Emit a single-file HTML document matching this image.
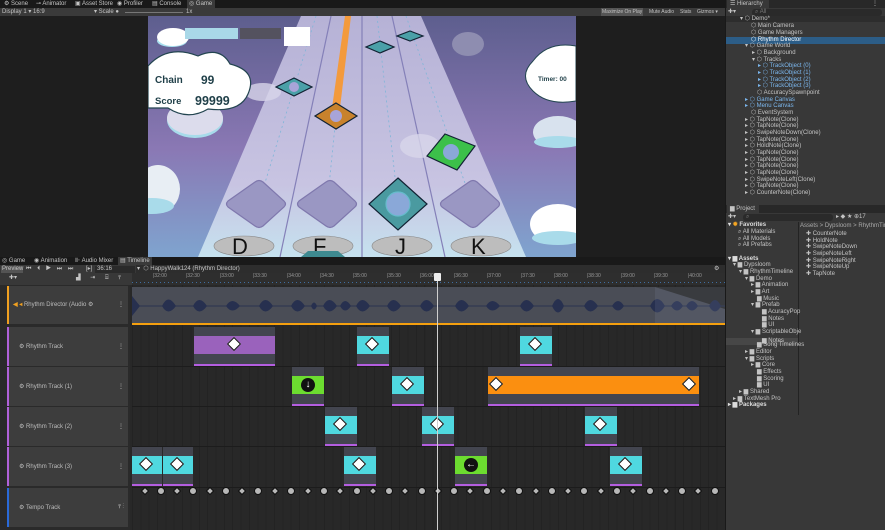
<!DOCTYPE html>
<html><head><meta charset="utf-8">
<style>
*{margin:0;padding:0;box-sizing:border-box}
body{width:885px;height:530px;background:#282828;font-family:"Liberation Sans",sans-serif;font-size:6px;color:#c4c4c4;position:relative;overflow:hidden}
.a{position:absolute;white-space:nowrap}
.clip{position:absolute;height:39px;background:#43454f}
.clip .c{position:absolute;left:0;right:0;top:9px;height:18px}
.clip .p{position:absolute;left:0;right:0;bottom:0;height:2px;background:#b45ee0}
.dm{position:absolute;width:10px;height:10px;background:#fff;border:1.5px solid #111;transform:rotate(45deg);top:4px}
.th{position:absolute;left:7px;width:121px;background:#3d3d3d;border-left:2px solid #b061d9}
.th span{position:absolute;left:10px;top:50%;margin-top:-4px;color:#bdbdbd}
.th i{position:absolute;right:4px;top:50%;margin-top:-4px;font-style:normal}
.h div{position:absolute;white-space:nowrap;height:7px;line-height:6.7px}
.cyan{background:#4fd8e0}
</style></head><body>
<div class="a" style="left:0;top:0;width:725px;height:8px;background:#191919"></div>
<div class="a" style="left:187px;top:0;width:28px;height:8px;background:#3a3a3a"></div>
<div class="a" style="left:4px;top:0;line-height:8px">⚙ Scene</div>
<div class="a" style="left:36px;top:0;line-height:8px">⊸ Animator</div>
<div class="a" style="left:75px;top:0;line-height:8px">▣ Asset Store</div>
<div class="a" style="left:117px;top:0;line-height:8px">◉ Profiler</div>
<div class="a" style="left:152px;top:0;line-height:8px">▤ Console</div>
<div class="a" style="left:189px;top:0;line-height:8px">◎ Game</div>
<div class="a" style="left:0;top:8px;width:725px;height:8px;background:#3a3a3a"></div>
<div class="a" style="left:2px;top:8px;line-height:8px">Display 1 ▾ 16:9</div>
<div class="a" style="left:94px;top:8px;line-height:8px">▾ Scale ●</div>
<div class="a" style="left:125px;top:12px;width:58px;height:1px;background:#777"></div>
<div class="a" style="left:186px;top:8px;line-height:8px">1x</div>
<div class="a" style="left:601px;top:8px;line-height:8px;background:#555;padding:0 1px;font-size:5px">Maximize On Play</div>
<div class="a" style="left:649px;top:8px;line-height:8px;font-size:5px">Mute Audio</div>
<div class="a" style="left:680px;top:8px;line-height:8px;font-size:5px">Stats</div>
<div class="a" style="left:697px;top:8px;line-height:8px;font-size:5px">Gizmos ▾</div>
<div class="a" style="left:0;top:16px;width:725px;height:241px;background:#1e1e1e"></div>
<svg class="a" style="left:148px;top:16px" width="428" height="241" viewBox="0 0 428 241">
<defs><linearGradient id="sky" x1="0" y1="0" x2="0" y2="1"><stop offset="0" stop-color="#5d5e8e"/><stop offset=".55" stop-color="#8a78b4"/><stop offset="1" stop-color="#7fa4cf"/></linearGradient>
<linearGradient id="ln" x1="0" y1="0" x2="0" y2="1"><stop offset="0" stop-color="#b6b2d6"/><stop offset=".7" stop-color="#c8c4e2"/><stop offset="1" stop-color="#c6e2ef"/></linearGradient></defs>
<rect width="428" height="241" fill="url(#sky)"/>
<ellipse cx="320" cy="28" rx="16" ry="12" fill="#8e8db0"/>
<polygon points="153,0 273,0 378,241 50,241" fill="url(#ln)"/>
<g stroke="#8480b8" stroke-width="1.2"><line x1="183" y1="0" x2="132" y2="241"/><line x1="214" y1="0" x2="214" y2="241"/><line x1="244" y1="0" x2="297" y2="241"/></g>
<g stroke="#7fb5d8" stroke-width=".8" stroke-dasharray="2 3"><line x1="168" y1="0" x2="116" y2="170"/><line x1="198" y1="0" x2="181" y2="170"/><line x1="229" y1="0" x2="248" y2="170"/><line x1="258" y1="0" x2="318" y2="170"/></g>
<ellipse cx="115" cy="76" rx="18" ry="9" fill="#d8d6ea" opacity=".8"/>
<ellipse cx="272" cy="130" rx="20" ry="12" fill="#d8d6ea" opacity=".8"/>
<ellipse cx="24" cy="25" rx="15" ry="6" fill="#a8e0ee"/><ellipse cx="25" cy="21" rx="16" ry="9" fill="#fff"/>
<rect x="37" y="12" width="53" height="11" fill="#a9d8e8"/><rect x="92" y="12" width="41" height="11" fill="#54525f"/><rect x="136" y="11" width="26" height="19" fill="#fff"/>
<ellipse cx="47" cy="104" rx="28" ry="18" fill="#a7dbea"/><ellipse cx="47" cy="102" rx="28" ry="17" fill="#dcdcec"/>
<path d="M0,50 Q20,28 50,40 Q72,30 82,48 Q110,55 100,78 Q92,97 60,93 Q40,105 20,92 L0,92 Z" fill="#fff" stroke="#234550" stroke-width="1.2"/>
<text x="7" y="67" font-family="Liberation Sans" font-weight="bold" font-size="10" fill="#1f3f48">Chain</text>
<text x="53" y="68" font-family="Liberation Sans" font-weight="bold" font-size="12" fill="#1f3f48">99</text>
<text x="7" y="88" font-family="Liberation Sans" font-weight="bold" font-size="9.5" fill="#1f3f48">Score</text>
<text x="47" y="89" font-family="Liberation Sans" font-weight="bold" font-size="12.5" fill="#1f3f48">99999</text>
<ellipse cx="10" cy="173" rx="22" ry="24" fill="#e8eef4"/><ellipse cx="4" cy="190" rx="22" ry="8" fill="#a9dbea"/>
<path d="M428,30 Q400,25 385,45 Q370,60 385,75 Q400,90 428,85 Z" fill="#fff" stroke="#234550" stroke-width="1"/>
<text x="390" y="65" font-family="Liberation Sans" font-weight="bold" font-size="6.5" fill="#1f3f48">Timer: 00</text>
<ellipse cx="410" cy="116" rx="25" ry="16" fill="#d8e2ee"/><ellipse cx="410" cy="126" rx="24" ry="6" fill="#a9dbea"/>
<ellipse cx="410" cy="208" rx="28" ry="20" fill="#fff"/><ellipse cx="410" cy="222" rx="26" ry="7" fill="#a9dbea"/>
<polygon points="197,0 203,0 192,92 184,92" fill="#f39a3c"/>
<g fill="#9a97c3" stroke="#7f78ad" stroke-width="1.2">
<path d="M107,166 Q111,163 115,166 L136,185 Q139,188 136,191 L115,210 Q111,213 107,210 L80,191 Q77,188 80,185 Z"/>
<path d="M178,166 Q182,163 186,166 L207,185 Q210,188 207,191 L186,210 Q182,213 178,210 L151,191 Q148,188 151,185 Z"/>
<path d="M321,166 Q325,163 329,166 L350,185 Q353,188 350,191 L329,210 Q325,213 321,210 L294,191 Q291,188 294,185 Z"/>
</g>
<g fill="#bdbdbd" stroke="#888" stroke-width=".6">
<ellipse cx="96" cy="230" rx="30" ry="10"/><ellipse cx="175" cy="230" rx="30" ry="10"/><ellipse cx="254" cy="230" rx="30" ry="10"/><ellipse cx="333" cy="230" rx="30" ry="10"/>
</g>
<g font-family="Liberation Sans" font-size="22" fill="#111"><text x="84" y="238">D</text><text x="165" y="238">F</text><text x="247" y="238">J</text><text x="323" y="238">K</text></g>
<polygon points="153,241 160,235 190,235 197,241" fill="#3e8a90"/>
<g stroke="#123" stroke-width="1.2">
<polygon points="250,162 279,188 250,214 221,188" fill="#4a9aa0"/><circle cx="250" cy="188" r="12" fill="#8aa8d8" stroke="#6bc"/>
<polygon points="146,62 164,71 146,80 128,71" fill="#4aa0a8"/><circle cx="146" cy="71" r="5" fill="#a8a4d8" stroke="none"/>
<polygon points="188,87 209,100 188,113 167,100" fill="#c8822c"/><circle cx="188" cy="100" r="6" fill="#a8a4d8" stroke="none"/>
<polygon points="232,25 246,31 232,37 218,31" fill="#4aa0a8"/>
<polygon points="262,15 275,20 262,25 249,20" fill="#4aa0a8"/>
<polygon points="297,118 327,130 309,154 279,140" fill="#3cc04a"/><circle cx="303" cy="136" r="8" fill="#8aa8d8" stroke="none"/>
</g>
</svg>
<div class="a" style="left:725px;top:0;width:160px;height:205px;background:#383838;border-left:1px solid #191919"></div>
<div class="a" style="left:726px;top:0;width:159px;height:8px;background:#282828"></div>
<div class="a" style="left:727px;top:0;width:42px;height:8px;background:#383838;line-height:8px;padding-left:3px">☰ Hierarchy</div>
<div class="a" style="left:872px;top:0;line-height:8px">⋮</div>
<div class="a" style="left:728px;top:9px;line-height:7px">✚▾</div>
<div class="a" style="left:752px;top:9px;width:130px;height:7px;background:#2a2a2a;border-radius:3px;line-height:7px;padding-left:3px;color:#777">⌕ All</div>
<div class="a" style="left:726px;top:16px;width:159px;height:6px;background:#2d2d2d"></div>
<div class="a" style="left:726px;top:37px;width:159px;height:7px;background:#2c5d87"></div>
<div class="h">
<div style="left:740px;top:16px">▾ ⬡ Demo*</div>
<div style="left:751px;top:23px">⬡ Main Camera</div>
<div style="left:751px;top:30px">⬡ Game Managers</div>
<div style="left:751px;top:37px;color:#fff">⬡ Rhythm Director</div>
<div style="left:745px;top:43px">▾ ⬡ Game World</div>
<div style="left:752px;top:50px">▸ ⬡ Background</div>
<div style="left:752px;top:57px">▾ ⬡ Tracks</div>
<div style="left:758px;top:63px;color:#7cb8ef">▸ ⬡ TrackObject (0)</div>
<div style="left:758px;top:70px;color:#7cb8ef">▸ ⬡ TrackObject (1)</div>
<div style="left:758px;top:77px;color:#7cb8ef">▸ ⬡ TrackObject (2)</div>
<div style="left:758px;top:83px;color:#7cb8ef">▸ ⬡ TrackObject (3)</div>
<div style="left:757px;top:90px">⬡ AccuracySpawnpoint</div>
<div style="left:745px;top:97px;color:#7cb8ef">▸ ⬡ Game Canvas</div>
<div style="left:745px;top:103px;color:#7cb8ef">▸ ⬡ Menu Canvas</div>
<div style="left:751px;top:110px">⬡ EventSystem</div>
<div style="left:745px;top:117px">▸ ⬡ TapNote(Clone)</div>
<div style="left:745px;top:123px">▸ ⬡ TapNote(Clone)</div>
<div style="left:745px;top:130px">▸ ⬡ SwipeNoteDown(Clone)</div>
<div style="left:745px;top:137px">▸ ⬡ TapNote(Clone)</div>
<div style="left:745px;top:143px">▸ ⬡ HoldNote(Clone)</div>
<div style="left:745px;top:150px">▸ ⬡ TapNote(Clone)</div>
<div style="left:745px;top:157px">▸ ⬡ TapNote(Clone)</div>
<div style="left:745px;top:163px">▸ ⬡ TapNote(Clone)</div>
<div style="left:745px;top:170px">▸ ⬡ TapNote(Clone)</div>
<div style="left:745px;top:177px">▸ ⬡ SwipeNoteLeft(Clone)</div>
<div style="left:745px;top:183px">▸ ⬡ TapNote(Clone)</div>
<div style="left:745px;top:190px">▸ ⬡ CounterNote(Clone)</div>
</div>
<div class="a" style="left:725px;top:205px;width:160px;height:325px;background:#383838;border-left:1px solid #191919"></div>
<div class="a" style="left:726px;top:205px;width:159px;height:8px;background:#282828"></div>
<div class="a" style="left:727px;top:205px;width:32px;height:8px;background:#383838;line-height:8px;padding-left:3px">▆ Project</div>
<div class="a" style="left:728px;top:214px;line-height:7px">✚▾</div>
<div class="a" style="left:743px;top:214px;width:90px;height:7px;background:#2a2a2a;border-radius:3px;line-height:7px;padding-left:3px;color:#777">⌕</div>
<div class="a" style="left:836px;top:214px;line-height:7px">▸ ◆ ★ ⊕17</div>
<div class="a" style="left:798px;top:222px;width:1px;height:193px;background:#232323"></div>
<div class="a" style="left:726px;top:338px;width:72px;height:7px;background:#474747"></div>
<div class="h">
<div style="left:728px;top:222px;color:#ddd;font-weight:bold">▾ <span style="color:#f5a623">✹</span> Favorites</div>
<div style="left:738px;top:229px">⌕ All Materials</div>
<div style="left:738px;top:236px">⌕ All Models</div>
<div style="left:738px;top:242px">⌕ All Prefabs</div>
<div style="left:728px;top:256px;color:#ddd;font-weight:bold">▾ ▆ Assets</div>
<div style="left:733px;top:262px">▾ ▆ Dypsloom</div>
<div style="left:739px;top:269px">▾ ▆ RhythmTimeline</div>
<div style="left:745px;top:276px">▾ ▆ Demo</div>
<div style="left:751px;top:282px">▸ ▆ Animation</div>
<div style="left:751px;top:289px">▸ ▆ Art</div>
<div style="left:757px;top:296px">▆ Music</div>
<div style="left:751px;top:302px">▾ ▆ Prefab</div>
<div style="left:762px;top:309px">▆ AcuracyPop</div>
<div style="left:762px;top:316px">▆ Notes</div>
<div style="left:762px;top:322px">▆ UI</div>
<div style="left:751px;top:329px">▾ ▆ ScriptableObje</div>
<div style="left:762px;top:338px">▆ Notes</div>
<div style="left:757px;top:342px">▆ Song Timelines</div>
<div style="left:745px;top:349px">▸ ▆ Editor</div>
<div style="left:745px;top:356px">▾ ▆ Scripts</div>
<div style="left:751px;top:362px">▸ ▆ Core</div>
<div style="left:757px;top:369px">▆ Effects</div>
<div style="left:757px;top:376px">▆ Scoring</div>
<div style="left:757px;top:382px">▆ UI</div>
<div style="left:739px;top:389px">▸ ▆ Shared</div>
<div style="left:733px;top:396px">▸ ▆ TextMesh Pro</div>
<div style="left:728px;top:402px;color:#ddd;font-weight:bold">▸ ▆ Packages</div>
<div style="left:800px;top:223px;color:#aaa">Assets &gt; Dypsloom &gt; RhythmTimeline</div>
<div style="left:806px;top:231px">✚ CounterNote</div>
<div style="left:806px;top:238px">✚ HoldNote</div>
<div style="left:806px;top:244px">✚ SwipeNoteDown</div>
<div style="left:806px;top:251px">✚ SwipeNoteLeft</div>
<div style="left:806px;top:258px">✚ SwipeNoteRight</div>
<div style="left:806px;top:264px">✚ SwipeNoteUp</div>
<div style="left:806px;top:271px">✚ TapNote</div>
</div>
<div class="a" style="left:0;top:257px;width:725px;height:8px;background:#191919"></div>
<div class="a" style="left:118px;top:257px;width:34px;height:8px;background:#3a3a3a"></div>
<div class="a" style="left:2px;top:257px;line-height:8px">◎ Game</div>
<div class="a" style="left:34px;top:257px;line-height:8px">◉ Animation</div>
<div class="a" style="left:75px;top:257px;line-height:8px">⊪ Audio Mixer</div>
<div class="a" style="left:120px;top:257px;line-height:8px">▤ Timeline</div>
<div class="a" style="left:0;top:265px;width:725px;height:20px;background:#383838"></div>
<div class="a" style="left:1px;top:266px;width:22px;height:7px;background:#545454;line-height:7px;padding-left:1px">Preview</div>
<div class="a" style="left:26px;top:266px;line-height:7px;letter-spacing:2px">⏮ ⏴ ▶ ⏭ ⏭</div>
<div class="a" style="left:86px;top:266px;line-height:7px">[▸]</div>
<div class="a" style="left:95px;top:266px;width:40px;height:7px;background:#2a2a2a;line-height:7px;padding-left:2px">36:16</div>
<div class="a" style="left:136px;top:265px;width:589px;height:8px;background:#2d2d2d"></div>
<div class="a" style="left:137px;top:266px;line-height:7px">▾ &nbsp;⬡ HappyWalk124 (Rhythm Director)</div>
<div class="a" style="left:714px;top:266px;line-height:7px">⚙</div>
<div class="a" style="left:9px;top:275px;line-height:7px">✚▾</div>
<div class="a" style="left:76px;top:275px;line-height:7px;letter-spacing:4px">▟ ⇥ ⌸ ⫯</div>
<div class="a" style="left:132px;top:273px;width:593px;height:12px;background:#2e2e2e"></div>
<div class="a" style="left:132px;top:282px;width:593px;height:1px;background:repeating-linear-gradient(90deg,#3f6ea0 0 1px,transparent 1px 4px)"></div>
<div class="a" style="left:132px;top:273px;width:593px;height:10px;color:#999;font-size:5px;line-height:6px">
<span class="a" style="left:21px">|32:00</span><span class="a" style="left:54px">|32:30</span><span class="a" style="left:88px">|33:00</span><span class="a" style="left:121px">|33:30</span><span class="a" style="left:155px">|34:00</span><span class="a" style="left:188px">|34:30</span><span class="a" style="left:221px">|35:00</span><span class="a" style="left:255px">|35:30</span><span class="a" style="left:288px">|36:00</span><span class="a" style="left:322px">|36:30</span><span class="a" style="left:355px">|37:00</span><span class="a" style="left:389px">|37:30</span><span class="a" style="left:422px">|38:00</span><span class="a" style="left:455px">|38:30</span><span class="a" style="left:489px">|39:00</span><span class="a" style="left:522px">|39:30</span><span class="a" style="left:556px">|40:00</span></div>
<div class="a" style="left:0;top:285px;width:130px;height:245px;background:#2a2a2a"></div>
<div class="th" style="top:286px;height:38px;border-left-color:#f0a020"><span style="left:4px"><b style="color:#f0a020">◀ ◂</b> Rhythm Director (Audio ⚙</span><i>⋮</i></div>
<div class="th" style="top:327px;height:39px"><span>⚙ Rhythm Track</span><i>⋮</i></div>
<div class="th" style="top:367px;height:39px"><span>⚙ Rhythm Track (1)</span><i>⋮</i></div>
<div class="th" style="top:407px;height:39px"><span>⚙ Rhythm Track (2)</span><i>⋮</i></div>
<div class="th" style="top:447px;height:39px"><span>⚙ Rhythm Track (3)</span><i>⋮</i></div>
<div class="th" style="top:488px;height:39px;border-left-color:#2a6ad8"><span>⚙ Tempo Track</span><i>⫯ ⋮</i></div>
<div class="a" style="left:132px;top:285px;width:593px;height:245px;background:#282828;background-image:repeating-linear-gradient(90deg,#232323 0 1px,transparent 1px 8.35px)"></div>
<div class="a" style="left:132px;top:366px;width:593px;height:1px;background:#1c1c1c"></div>
<div class="a" style="left:132px;top:406px;width:593px;height:1px;background:#1c1c1c"></div>
<div class="a" style="left:132px;top:446px;width:593px;height:1px;background:#1c1c1c"></div>
<div class="a" style="left:132px;top:487px;width:593px;height:1px;background:#1c1c1c"></div>
<div class="a" style="left:132px;top:287px;width:593px;height:36px;background:#4a4d56"></div>
<svg class="a" style="left:132px;top:287px" width="593" height="36">
<polygon points="523,0 593,0 593,22" fill="#2c2c2c"/>
<line x1="0" y1="19" x2="593" y2="19" stroke="#2a3350" stroke-width="1"/>
<g fill="#27304f">
<path d="M0,9 L8,19 L0,29Z"/>
<path d="M30,19 Q36,6 44,19 Q36,30 30,19Z"/><path d="M61,19 Q67,7 75,19 Q67,30 61,19Z"/><path d="M94,19 Q100,9 108,19 Q100,28 94,19Z"/><path d="M127,19 Q133,7 141,19 Q133,30 127,19Z"/><path d="M159,19 Q165,7 173,19 Q165,30 159,19Z"/><path d="M179,19 Q182,12 185,19 Q182,26 179,19Z"/><path d="M191,19 Q197,7 205,19 Q197,30 191,19Z"/><path d="M208,19 Q213,9 219,19 Q213,28 208,19Z"/><path d="M224,19 Q230,7 238,19 Q230,30 224,19Z"/><path d="M255,19 Q261,7 269,19 Q261,30 255,19Z"/><path d="M288,19 Q294,7 302,19 Q294,30 288,19Z"/><path d="M323,19 Q329,7 337,19 Q329,30 323,19Z"/><path d="M354,19 Q360,9 368,19 Q360,28 354,19Z"/><path d="M388,19 Q394,7 402,19 Q394,30 388,19Z"/><path d="M420,19 Q426,5 432,19 Q426,32 420,19Z"/><path d="M452,19 Q458,7 466,19 Q458,30 452,19Z"/><path d="M480,19 Q486,9 492,19 Q486,28 480,19Z"/><path d="M518,19 Q525,5 533,19 Q525,32 518,19Z"/><path d="M539,19 Q545,9 551,19 Q545,28 539,19Z"/><path d="M554,19 Q560,9 566,19 Q560,28 554,19Z"/><path d="M577,19 Q583,7 589,19 Q583,30 577,19Z"/></g>
<rect x="523" y="0" width="70" height="36" fill="#8892b0" opacity=".15"/>
</svg>
<div class="a" style="left:132px;top:323px;width:593px;height:2px;background:#f5a00f"></div>
<div class="clip" style="left:194px;top:327px;width:81px"><div class="c" style="background:#9a62bc"></div><div class="dm" style="left:35px;top:12px"></div><div class="p"></div></div>
<div class="clip" style="left:357px;top:327px;width:32px"><div class="c cyan"></div><div class="dm" style="left:10px;top:12px"></div><div class="p"></div></div>
<div class="clip" style="left:520px;top:327px;width:32px"><div class="c cyan"></div><div class="dm" style="left:10px;top:12px"></div><div class="p"></div></div>
<div class="clip" style="left:292px;top:367px;width:32px"><div class="c" style="background:#6cdc30"></div><div class="a" style="left:9px;top:11px;width:14px;height:14px;border-radius:50%;background:#111;color:#fff;font-size:10px;line-height:14px;text-align:center;font-weight:bold">↓</div><div class="p"></div></div>
<div class="clip" style="left:392px;top:367px;width:32px"><div class="c cyan"></div><div class="dm" style="left:10px;top:12px"></div><div class="p"></div></div>
<div class="clip" style="left:488px;top:367px;width:211px"><div class="c" style="background:#fb8f10"></div><div class="dm" style="left:3px;top:12px"></div><div class="dm" style="left:196px;top:12px"></div><div class="p"></div></div>
<div class="clip" style="left:325px;top:407px;width:32px"><div class="c cyan"></div><div class="dm" style="left:10px;top:12px"></div><div class="p"></div></div>
<div class="clip" style="left:422px;top:407px;width:32px"><div class="c cyan"></div><div class="dm" style="left:10px;top:12px"></div><div class="p"></div></div>
<div class="clip" style="left:585px;top:407px;width:32px"><div class="c cyan"></div><div class="dm" style="left:10px;top:12px"></div><div class="p"></div></div>
<div class="clip" style="left:132px;top:447px;width:30px"><div class="c cyan"></div><div class="dm" style="left:9px;top:12px"></div><div class="p"></div></div>
<div class="clip" style="left:163px;top:447px;width:30px"><div class="c cyan"></div><div class="dm" style="left:9px;top:12px"></div><div class="p"></div></div>
<div class="clip" style="left:344px;top:447px;width:32px"><div class="c cyan"></div><div class="dm" style="left:10px;top:12px"></div><div class="p"></div></div>
<div class="clip" style="left:455px;top:447px;width:32px"><div class="c" style="background:#6cdc30"></div><div class="a" style="left:9px;top:11px;width:14px;height:14px;border-radius:50%;background:#111;color:#fff;font-size:10px;line-height:14px;text-align:center;font-weight:bold">←</div><div class="p"></div></div>
<div class="clip" style="left:610px;top:447px;width:32px"><div class="c cyan"></div><div class="dm" style="left:10px;top:12px"></div><div class="p"></div></div>
<svg class="a" style="left:132px;top:485px" width="593" height="12">
<g fill="#b8b8b8" stroke="#111" stroke-width="1">
<polygon points="13,2.5 16.5,6 13,9.5 9.5,6"/><circle cx="29" cy="6" r="3.5"/><polygon points="45,2.5 48.5,6 45,9.5 41.5,6"/><circle cx="61" cy="6" r="3.5"/><polygon points="78,2.5 81.5,6 78,9.5 74.5,6"/><circle cx="94" cy="6" r="3.5"/><polygon points="110,2.5 113.5,6 110,9.5 106.5,6"/><circle cx="126" cy="6" r="3.5"/><polygon points="143,2.5 146.5,6 143,9.5 139.5,6"/><circle cx="159" cy="6" r="3.5"/><polygon points="176,2.5 179.5,6 176,9.5 172.5,6"/><circle cx="192" cy="6" r="3.5"/><polygon points="208,2.5 211.5,6 208,9.5 204.5,6"/><circle cx="225" cy="6" r="3.5"/><polygon points="241,2.5 244.5,6 241,9.5 237.5,6"/><circle cx="257" cy="6" r="3.5"/><polygon points="273,2.5 276.5,6 273,9.5 269.5,6"/><circle cx="290" cy="6" r="3.5"/><polygon points="306,2.5 309.5,6 306,9.5 302.5,6"/><circle cx="322" cy="6" r="3.5"/><polygon points="338,2.5 341.5,6 338,9.5 334.5,6"/><circle cx="355" cy="6" r="3.5"/><polygon points="371,2.5 374.5,6 371,9.5 367.5,6"/><circle cx="387" cy="6" r="3.5"/><polygon points="404,2.5 407.5,6 404,9.5 400.5,6"/><circle cx="420" cy="6" r="3.5"/><polygon points="436,2.5 439.5,6 436,9.5 432.5,6"/><circle cx="452" cy="6" r="3.5"/><polygon points="469,2.5 472.5,6 469,9.5 465.5,6"/><circle cx="485" cy="6" r="3.5"/><polygon points="501,2.5 504.5,6 501,9.5 497.5,6"/><circle cx="518" cy="6" r="3.5"/><polygon points="534,2.5 537.5,6 534,9.5 530.5,6"/><circle cx="550" cy="6" r="3.5"/><polygon points="566,2.5 569.5,6 566,9.5 562.5,6"/><circle cx="583" cy="6" r="3.5"/>
</g></svg>
<div class="a" style="left:437px;top:274px;width:1px;height:256px;background:#cfcfcf"></div>
<div class="a" style="left:434px;top:273px;width:7px;height:8px;background:#eee;border-radius:1px"></div>
</body></html>
